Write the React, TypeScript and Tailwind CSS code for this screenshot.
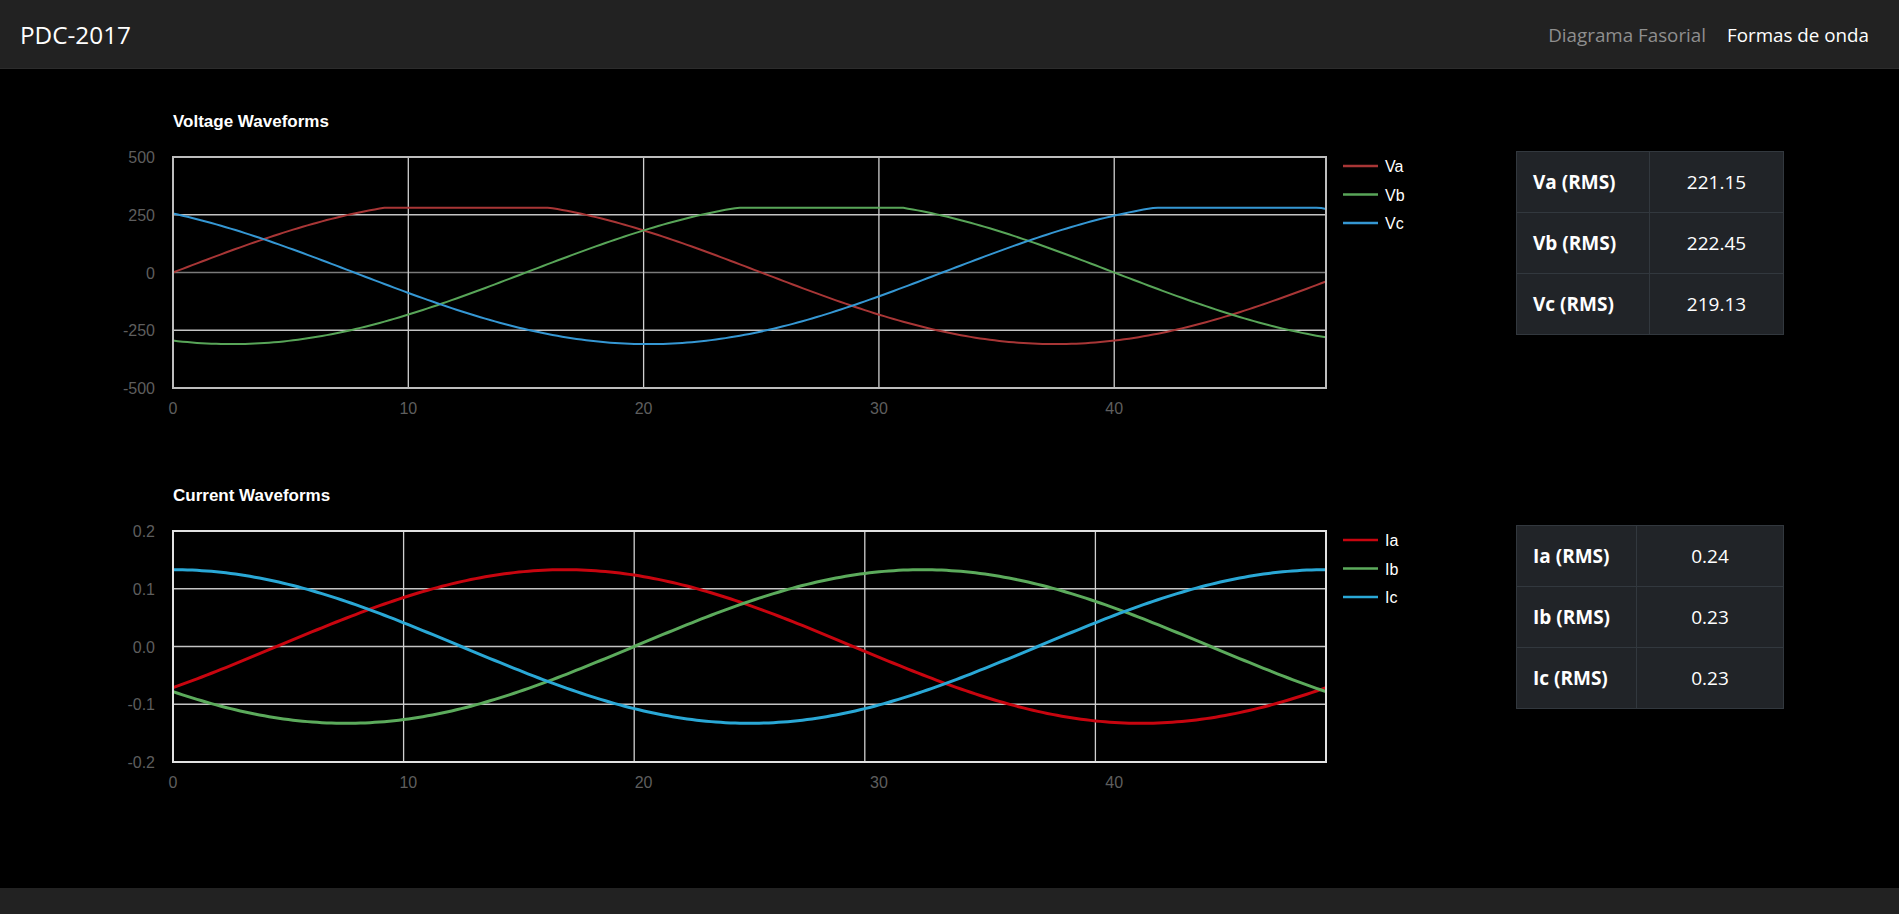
import React from "react"

const X0 = 73
const PW = 1153
const Y0 = 62
const PH = 231

type Series = { name: string; color: string; fn: (t: number) => number }

function buildPath(fn: (t: number) => number, min: number, max: number) {
  const pts: string[] = []
  for (let i = 0; i <= 240; i++) {
    const t = i / 240
    const v = fn(t)
    const x = X0 + t * PW
    const y = Y0 + ((max - v) / (max - min)) * PH
    pts.push(`${i === 0 ? "M" : "L"}${x.toFixed(2)},${y.toFixed(2)}`)
  }
  return pts.join(" ")
}

const clipTop = (v: number) => Math.min(v, 280)
const vx = (t: number) => t * 49

const voltage: Series[] = [
  { name: "Va", color: "#a83636", fn: (t) => clipTop(310 * Math.sin((2 * Math.PI * vx(t)) / 50)) },
  { name: "Vb", color: "#58a558", fn: (t) => clipTop(310 * Math.sin((2 * Math.PI * (vx(t) - 15)) / 50)) },
  { name: "Vc", color: "#3597d3", fn: (t) => clipTop(310 * Math.sin((2 * Math.PI * (vx(t) + 17.3)) / 50)) },
]

const current: Series[] = [
  { name: "Ia", color: "#c8050f", fn: (t) => 0.133 * Math.sin(2 * Math.PI * (t - 0.09)) },
  { name: "Ib", color: "#5cab5c", fn: (t) => 0.133 * Math.sin(2 * Math.PI * (t - 0.4)) },
  { name: "Ic", color: "#2aa8d6", fn: (t) => 0.133 * Math.cos(2 * Math.PI * t) },
]

const xTicks = [0, 10, 20, 30, 40]

function Chart({
  title,
  series,
  min,
  max,
  yLabels,
  vGrid,
  hGrid,
  zeroColor,
  border,
  stroke,
}: {
  title: string
  series: Series[]
  min: number
  max: number
  yLabels: string[]
  vGrid: number[]
  hGrid: number[]
  zeroColor: string
  border: string
  stroke: number
}) {
  const yOf = (v: number) => Y0 + ((max - v) / (max - min)) * PH
  return (
    <svg width={1340} height={340} className="shrink-0 ml-[100px]" style={{ fontFamily: "'Liberation Sans', Arial, sans-serif" }}>
      <text x={X0} y={32} fill="#fff" fontSize={17} fontWeight="bold">
        {title}
      </text>

      {hGrid.map((v) => (
        <line key={v} x1={X0} x2={X0 + PW} y1={yOf(v)} y2={yOf(v)} stroke={v === 0 ? zeroColor : "#c4c4c4"} strokeWidth={1.5} />
      ))}
      {vGrid.map((x) => (
        <line key={x} x1={x} x2={x} y1={Y0} y2={Y0 + PH} stroke="#d0d0d0" strokeWidth={1.3} />
      ))}

      {series.map((s) => (
        <path key={s.name} d={buildPath(s.fn, min, max)} fill="none" stroke={s.color} strokeWidth={stroke} strokeLinejoin="round" />
      ))}

      <rect x={X0} y={Y0} width={PW} height={PH} fill="none" stroke={border} strokeWidth={2} />

      {yLabels.map((l, i) => (
        <text key={l} x={55} y={Y0 + (i * PH) / 4 + 6} fill="#5e5e5e" fontSize={16} textAnchor="end">
          {l}
        </text>
      ))}
      {xTicks.map((k) => (
        <text key={k} x={X0 + (PW * k) / 49} y={319} fill="#5e5e5e" fontSize={16} textAnchor="middle">
          {k}
        </text>
      ))}

      {series.map((s, i) => (
        <g key={s.name}>
          <line x1={1243} x2={1278} y1={71 + i * 28.5} y2={71 + i * 28.5} stroke={s.color} strokeWidth={2.5} />
          <text x={1285} y={77 + i * 28.5} fill="#fff" fontSize={16}>
            {s.name}
          </text>
        </g>
      ))}
    </svg>
  )
}

function RmsTable({ rows, labelWidth }: { rows: [string, string][]; labelWidth: string }) {
  return (
    <table className="ml-[76px] mt-[56px] w-[268px] table-fixed border-collapse border border-[#32383e] bg-[#212428] text-[19px] text-white">
      <colgroup>
        <col className={labelWidth} />
        <col />
      </colgroup>
      <tbody>
        {rows.map(([label, value]) => (
          <tr key={label} className="h-[61px] border-t border-[#32383e]">
            <th className="border-r border-[#32383e] px-4 text-left font-bold whitespace-nowrap">{label}</th>
            <td className="px-4 text-center">{value}</td>
          </tr>
        ))}
      </tbody>
    </table>
  )
}

export default function App() {
  const vGridVoltage = [10, 20, 30, 40].map((k) => X0 + (PW * k) / 49)
  const vGridCurrent = [1, 2, 3, 4].map((k) => X0 + (PW * k) / 5)

  return (
    <div className="flex min-h-screen flex-col bg-black" style={{ fontFamily: "'Open Sans', 'Noto Sans', sans-serif" }}>
      <nav className="flex h-[69px] shrink-0 items-center justify-between border-b border-[#2c2c2c] bg-[#222222] pl-[20px] pr-[30px] pt-[3px]">
        <span className="text-[24.3px] text-white">PDC-2017</span>
        <div className="flex gap-[21px] text-[18.8px]">
          <a className="text-[#8f8f8f]">Diagrama Fasorial</a>
          <a className="text-white">Formas de onda</a>
        </div>
      </nav>

      <main className="flex flex-1 flex-col gap-[34px] pt-[26px]">
        <div className="flex items-start">
          <Chart
            title="Voltage Waveforms"
            series={voltage}
            min={-500}
            max={500}
            yLabels={["500", "250", "0", "-250", "-500"]}
            vGrid={vGridVoltage}
            hGrid={[250, 0, -250]}
            zeroColor="#7a7a7a"
            border="#bdbdbd"
            stroke={2}
          />
          <RmsTable
            labelWidth="w-[133px]"
            rows={[
              ["Va (RMS)", "221.15"],
              ["Vb (RMS)", "222.45"],
              ["Vc (RMS)", "219.13"],
            ]}
          />
        </div>

        <div className="flex items-start">
          <Chart
            title="Current Waveforms"
            series={current}
            min={-0.2}
            max={0.2}
            yLabels={["0.2", "0.1", "0.0", "-0.1", "-0.2"]}
            vGrid={vGridCurrent}
            hGrid={[0.1, 0, -0.1]}
            zeroColor="#c4c4c4"
            border="#e2e2e2"
            stroke={3}
          />
          <RmsTable
            labelWidth="w-[120px]"
            rows={[
              ["Ia (RMS)", "0.24"],
              ["Ib (RMS)", "0.23"],
              ["Ic (RMS)", "0.23"],
            ]}
          />
        </div>
      </main>

      <footer className="h-[26px] shrink-0 bg-[#222222]" />
    </div>
  )
}
